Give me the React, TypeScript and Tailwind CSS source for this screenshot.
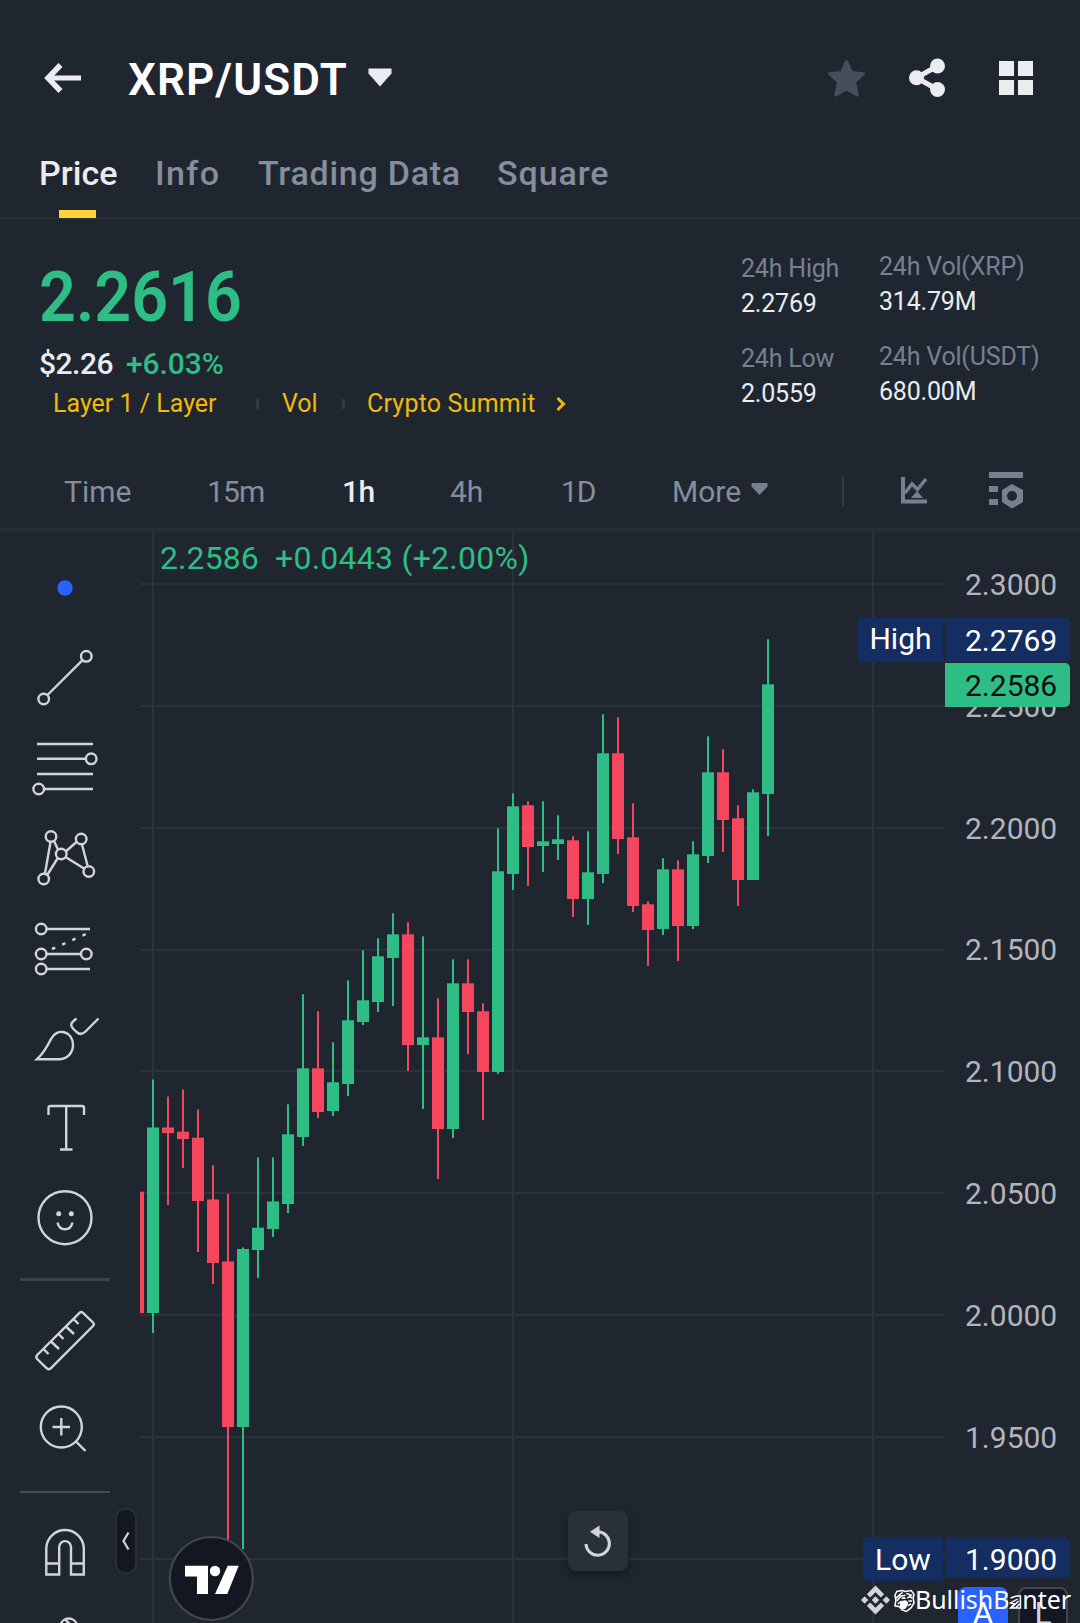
import React from "react";

const GREEN = "#2ebd85";
const RED = "#f6465d";

// [direction, high, body top, body bottom, low], one candle every 15px
const candles: [string, number, number, number, number][] = [
  ["g", 1079.5, 1127.5, 1313, 1333],
  ["r", 1096.5, 1127.5, 1133, 1205],
  ["r", 1089.5, 1131.7, 1139, 1168],
  ["r", 1109.5, 1137.7, 1201, 1252],
  ["r", 1165.2, 1199.5, 1263, 1284],
  ["r", 1193.8, 1261.5, 1427, 1545],
  ["g", 1247.5, 1249, 1427, 1549],
  ["g", 1157.5, 1227.7, 1250, 1278],
  ["g", 1157.5, 1201.5, 1229, 1237],
  ["g", 1104.3, 1134.3, 1204, 1213],
  ["g", 994.3, 1068.3, 1137, 1146],
  ["r", 1011.3, 1068.3, 1112, 1118],
  ["g", 1042.3, 1082.3, 1111, 1116],
  ["g", 980.3, 1020.3, 1084, 1096],
  ["g", 950.3, 1000.3, 1022, 1025],
  ["g", 938.3, 956.3, 1002, 1012],
  ["g", 913.3, 934.3, 958, 1006],
  ["r", 922.3, 934.3, 1045, 1071],
  ["g", 936.3, 1037.3, 1045, 1109],
  ["r", 998.3, 1037.3, 1129, 1179],
  ["g", 959.3, 983.3, 1129, 1138],
  ["r", 959.3, 983.3, 1012, 1054],
  ["r", 1003.3, 1011.3, 1072, 1120],
  ["g", 828.3, 871.3, 1072, 1074],
  ["g", 793.3, 806.3, 874, 890],
  ["r", 801.3, 805.3, 847, 886],
  ["g", 801.3, 841.3, 846, 872],
  ["g", 815.3, 839.3, 844, 860],
  ["r", 836.3, 840.3, 899, 917],
  ["g", 831.3, 872.3, 899, 925],
  ["g", 714.3, 753.3, 874, 883],
  ["r", 717.3, 753.3, 839, 854],
  ["r", 803.3, 837.3, 906, 912],
  ["r", 901.3, 904.3, 930, 966],
  ["g", 858.3, 869.3, 929, 935],
  ["r", 860.3, 869.3, 926, 961],
  ["g", 841.3, 854.3, 926, 929],
  ["g", 736.3, 772.3, 856, 863],
  ["r", 749.3, 772.3, 820, 852],
  ["r", 805.3, 818.3, 880, 906],
  ["g", 789.3, 792.3, 880, 880],
  ["g", 639.3, 684.3, 794, 836],
];

const gridYs = [584, 706, 828, 950, 1071, 1193, 1315, 1437, 1559];
const axisLabels = ["2.3000", "2.2500", "2.2000", "2.1500", "2.1000", "2.0500", "2.0000", "1.9500"];

function Header() {
  return (
    <header className="flex h-[158px] items-center pl-[43px] pr-[47px]">
      <svg className="h-[32px] w-[39px] -mt-[2px]" viewBox="43 62 39 32" fill="none" stroke="#eaecef" strokeWidth="5">
        <path d="M81 78H48" />
        <path d="M60.500 65L48 78L60.500 91" strokeWidth="5.500" />
      </svg>
      <h1 className="ml-[46px] mt-[2px] w-[239px] text-[44px] font-semibold leading-none tracking-[1.1px] text-white">XRP/USDT</h1>
      <svg className="ml-[1px] -mt-[3px] h-[19px] w-[24px]" viewBox="0 0 24 19" fill="#eaecef">
        <path d="M0.500 0.500H23.500V5.500L12 18.500L0.500 5.500Z" />
      </svg>
      <div className="ml-auto flex items-center">
        <svg className="h-[40px] w-[40px]" viewBox="827 59 40 40" fill="#474d59" stroke="#474d59" strokeWidth="3" strokeLinejoin="round">
          <path d="M847.500 61.500L852.500 72.500L864.500 73.700L855.500 82L858.200 95L847.500 89L836.800 95L839.500 82L830.500 73.700L842.500 72.500Z" />
        </svg>
        <svg className="ml-[42px] h-[40px] w-[38px] -mt-[2px]" viewBox="909 58 38 40" fill="#eaecef">
          <path d="M938.500 66L917.500 77.700L938.500 89.500" fill="none" stroke="#eaecef" strokeWidth="5" />
          <circle cx="938.500" cy="66" r="7.500" />
          <circle cx="917.500" cy="77.700" r="7.500" />
          <circle cx="938.500" cy="89.500" r="7.500" />
        </svg>
        <div className="-mt-[2px] ml-[53px] grid grid-cols-2 gap-1">
          <i className="size-[15px] bg-[#eaecef]" />
          <i className="size-[15px] bg-[#eaecef]" />
          <i className="size-[15px] bg-[#eaecef]" />
          <i className="size-[15px] bg-[#eaecef]" />
        </div>
      </div>
    </header>
  );
}

function Tabs() {
  return (
    <nav className="grid h-[61px] grid-cols-[116px_103px_239px_200px] border-b-2 border-[#29303a] pl-[39px] text-[34px] font-medium leading-[30px] text-[#848e9c]">
      <span className="relative text-[#eaecef]">
        Price
        <i className="absolute -bottom-px left-[20px] h-2 w-[37px] bg-[#fcd535]" />
      </span>
      <span className="tracking-[1.4px]">Info</span>
      <span className="tracking-[0.75px]">Trading Data</span>
      <span className="tracking-[0.9px]">Square</span>
    </nav>
  );
}

function Stat({ label, value }: { label: string; value: string }) {
  return (
    <div className="h-[70px] whitespace-nowrap text-[25px] leading-[35px] tracking-[-0.2px] text-[#eaecef]">
      <div className="text-[#76808f]">{label}</div>
      <div>{value}</div>
    </div>
  );
}

function Summary() {
  return (
    <section className="flex h-[236px]">
      <div className="w-[741px] pl-[39px] pt-[47px]">
        <div className="h-[62px] origin-left scale-x-[0.91] text-[71px] font-semibold leading-[62px] text-[#2ebd85]">2.2616</div>
        <div className="mt-[18px] flex h-[36px] text-[30px] font-medium leading-[36px]">
          <span className="w-[87px] tracking-[-0.5px] text-[#eaecef]">$2.26</span>
          <span className="tracking-[-0.1px] text-[#2ebd85]">+6.03%</span>
        </div>
        <div className="mt-2 flex h-7 items-center whitespace-nowrap pl-[14px] text-[25px] leading-7 text-[#f0b90b]">
          <span className="w-[203px]">Layer 1 / Layer</span>
          <i className="h-[10px] w-[3px] bg-[#333b47]" />
          <span className="ml-[23px] w-[60px]">Vol</span>
          <i className="h-[10px] w-[3px] bg-[#333b47]" />
          <span className="ml-[22px] w-[189px] tracking-[0.2px]">Crypto Summit</span>
          <svg className="h-4 w-[10px]" viewBox="0 0 10 16" fill="none" stroke="#f0b90b" strokeWidth="3">
            <path d="M1.500 2L7.500 8L1.500 14" />
          </svg>
        </div>
      </div>
      <div className="flex w-[138px] flex-col gap-5 pt-[32px]">
        <Stat label="24h High" value="2.2769" />
        <Stat label="24h Low" value="2.0559" />
      </div>
      <div className="flex flex-col gap-5 pt-[30px]">
        <Stat label="24h Vol(XRP)" value="314.79M" />
        <Stat label="24h Vol(USDT)" value="680.00M" />
      </div>
    </section>
  );
}

function Intervals() {
  return (
    <div className="grid h-[76px] grid-cols-[143px_135px_108px_111px_111px_79px_91px_58px_88px_40px] items-center border-b-[3px] border-[#262d37] pl-[64px] pt-px text-[30px] leading-none text-[#848e9c]">
      <span>Time</span>
      <span className="tracking-[-0.9px]">15m</span>
      <span className="font-medium tracking-[-0.5px] text-[#eaecef]">1h</span>
      <span>4h</span>
      <span className="tracking-[-1.2px]">1D</span>
      <span>More</span>
      <svg className="-mt-[7px] h-3 w-[17px]" viewBox="0 0 17 12" fill="#76808f">
        <path d="M0.500 0H16.500V3.500L8.500 12L0.500 3.500Z" />
      </svg>
      <i className="-mt-[2px] h-[30px] w-[2px] bg-[#333b47]" />
      <svg className="-mt-[4px] h-7 w-7" viewBox="901 476 28 28" fill="none" stroke="#76808f" strokeWidth="4">
        <path d="M904 477V501.500H928" />
        <path d="M906 493L913 484L918.500 489.500L927 479" strokeWidth="3.500" />
        <path d="M912 498L918 491L924 498Z" fill="#76808f" stroke="none" />
      </svg>
      <svg className="-mt-[4px] h-[38px] w-9" viewBox="990 472 36 38" fill="#76808f">
        <path d="M991 473H1025V479H991ZM991 487H1000V493H991ZM991 500H1000V506H991Z" />
        <path fillRule="evenodd" d="M1014 485L1025 491V503L1014 509.500L1004 503V491ZM1014 492A5 5 0 1 0 1014 502A5 5 0 1 0 1014 492Z" />
      </svg>
    </div>
  );
}

function Tool({ y, h, children }: { y: number; h: number; children: React.ReactNode }) {
  return (
    <svg width="140" height={h} viewBox={`0 ${y} 140 ${h}`} className="block shrink-0" fill="none" stroke="#d1d4dc" strokeWidth="2.400">
      {children}
    </svg>
  );
}

function Toolbar() {
  return (
    <aside className="relative flex w-[140px] flex-col">
      <Tool y={531} h={94}>
        <circle cx="65" cy="588" r="7.700" fill="#2962ff" stroke="none" />
      </Tool>
      <Tool y={625} h={95}>
        <circle cx="43.700" cy="699" r="5.300" />
        <circle cx="86.300" cy="656.300" r="5.300" />
        <path d="M47.500 695L82.300 660.300" />
      </Tool>
      <Tool y={720} h={90}>
        <path d="M37 744H93M37 758.800H85.500M37 774H93M44 789H93" />
        <circle cx="91.200" cy="758.800" r="5.300" />
        <circle cx="38.700" cy="789" r="5.300" />
      </Tool>
      <Tool y={810} h={90}>
        <path d="M54 841L58 849.500M50.500 842L45 873.500M47.500 874.500L57.500 858.500M65.700 851.500L76.500 842M65.500 857L84 868.500M82 844.500L87.500 865.500" />
        <circle cx="51" cy="836.500" r="5.300" />
        <circle cx="81.200" cy="839" r="5.300" />
        <circle cx="61.200" cy="854" r="5.300" />
        <circle cx="43.700" cy="879" r="5.300" />
        <circle cx="88.800" cy="871.500" r="5.300" />
      </Tool>
      <Tool y={900} h={95}>
        <path d="M46.500 929H90M46.500 954H81M46.500 969H90" />
        <circle cx="41.200" cy="929" r="5.300" />
        <circle cx="41.200" cy="954" r="5.300" />
        <circle cx="86.300" cy="954" r="5.300" />
        <circle cx="41.200" cy="969" r="5.300" />
        <path d="M52 949L86 934" strokeWidth="2.500" strokeDasharray="3.500 7.600" />
      </Tool>
      <Tool y={995} h={85}>
        <path d="M37 1059.200C44 1053 48 1045 51 1039C57 1027 73 1031 73 1045C73 1053 67 1059.200 59 1059.200Z" />
        <path d="M76.500 1018.500L73 1021.500Q69.500 1024.500 73 1028.500L76.500 1032Q81 1036 85.500 1031.500L98.500 1018.500" />
      </Tool>
      <Tool y={1080} h={90}>
        <path d="M48.500 1115V1108Q48.500 1106 50.500 1106H82Q84 1106 84 1108V1115M66.200 1106V1149.500M60 1149.500H72.500" />
      </Tool>
      <Tool y={1170} h={95}>
        <circle cx="65" cy="1217.700" r="26.500" />
        <circle cx="58.700" cy="1213.700" r="2.500" fill="#d1d4dc" stroke="none" />
        <circle cx="71.300" cy="1213.700" r="2.500" fill="#d1d4dc" stroke="none" />
        <path d="M57.500 1222.500C59.500 1231.500 70.500 1231.500 72.500 1222.500" />
      </Tool>
      <div className="ml-5 mt-[13px] h-[3px] w-[90px] bg-[#3b424d]" />
      <div className="h-[14px]" />
      <Tool y={1295} h={90}>
        <path d="M79.500 1312.800Q81.200 1311.200 83 1312.800L93 1322.500Q94.700 1324.200 93 1326L50.500 1368.500Q48.700 1370 47 1368.500L37.200 1359Q35.500 1357 37.200 1355Z" />
        <path d="M43.500 1349L48.500 1354M51 1341.500L59 1349M58.500 1334L63.500 1339M66 1326.500L74 1334M73.500 1319L78.500 1324" />
      </Tool>
      <Tool y={1385} h={85}>
        <circle cx="61.300" cy="1427" r="20.500" />
        <path d="M52.500 1427H70M61.300 1418V1435.500M76 1441.500L85.500 1451" />
      </Tool>
      <div className="mt-[21px] ml-5 h-[2px] w-[90px] bg-[#434a54]" />
      <Tool y={1493} h={102}>
        <path d="M46.300 1574.500V1547.500A18.800 18.800 0 0 1 83.800 1547.500V1574.500H71V1547A5.900 5.900 0 0 0 59.200 1547V1574.500ZM46.300 1563.500H59.200M71 1563.500H83.800" />
      </Tool>
      <Tool y={1595} h={28}>
        <path d="M60.500 1625A8.500 8.500 0 0 1 77 1625M65.500 1620L71 1625" />
      </Tool>
      <button className="absolute left-[115px] top-[977px] flex h-[66px] w-[22px] items-center justify-center rounded-[10px] border-2 border-[#2a2e39] bg-[#131722]">
        <svg className="h-[20px] w-[8px]" viewBox="0 0 8 20" fill="none" stroke="#d1d4dc" strokeWidth="2.200">
          <path d="M6.500 1.500L1.500 10L6.500 18.500" />
        </svg>
      </button>
    </aside>
  );
}

function Plot() {
  return (
    <div className="relative w-[805px]">
      <svg width="805" height="1092" viewBox="140 531 805 1092" className="block">
        <g stroke="#2b323c" strokeWidth="2">
          {gridYs.map((y) => (
            <path key={y} d={`M140 ${y}H945`} />
          ))}
          <path d="M153 531V1623M513 531V1623M873 531V1623" />
        </g>
        <rect x="140" y="1191.700" width="4" height="121.300" fill={RED} />
        {candles.map(([dir, high, top, bottom, low], i) => {
          const x = 153 + i * 15;
          return (
            <g key={x} fill={dir === "g" ? GREEN : RED}>
              <rect x={x - 1} y={high} width="2" height={low - high} />
              <rect x={x - 6} y={top} width="12" height={bottom - top} />
            </g>
          );
        })}
        <circle cx="211.300" cy="1578.500" r="41.500" fill="#131722" stroke="#434651" strokeWidth="2.200" />
        <path d="M185 1565.700H208V1594H197V1576.500H185ZM227.700 1565.700H238.700L227.300 1594H215Z" fill="#fff" />
        <circle cx="215" cy="1571" r="5.200" fill="#fff" />
      </svg>
      <div className="absolute left-[20px] top-[9px] flex whitespace-nowrap text-[32px] leading-[36px] text-[#2ebd85]">
        <span className="w-[115px] tracking-[0.1px]">2.2586</span>
        <span className="tracking-[0.25px]">+0.0443 (+2.00%)</span>
      </div>
      <button className="absolute left-[428px] top-[980px] flex size-[60px] items-center justify-center rounded-lg bg-[#2a303a] shadow-[0_4px_8px_rgba(0,0,0,0.4)]">
        <svg className="size-8" viewBox="582 1525 32 32" fill="none" stroke="#d1d4dc" strokeWidth="3">
          <path d="M586 1544A11.700 11.700 0 1 0 597.500 1531.800" />
          <path d="M599.500 1525.500V1538L590 1531.800Z" fill="#d1d4dc" stroke="none" />
        </svg>
      </button>
      <div className="absolute right-[2px] top-[87px] h-[44px] w-[85px] rounded-l-[4px] bg-[#142e61] text-center text-[30px] leading-[41px] text-white">High</div>
      <div className="absolute right-[2px] top-[1006px] h-[44px] w-[80px] rounded-l-[4px] bg-[#142e61] text-center text-[30px] leading-[45px] text-white">Low</div>
    </div>
  );
}

function PriceAxis() {
  return (
    <div className="relative w-[135px] text-[30px] text-[#b2b5be]">
      <div className="-mt-[7px] flex flex-col pl-5">
        {axisLabels.map((label) => (
          <div key={label} className="h-[121.800px] leading-[121.800px]">
            {label}
          </div>
        ))}
      </div>
      <div className="absolute left-0 top-[87px] h-[44px] w-[125px] rounded-r-[5px] bg-[#142e61] pl-5 leading-[46px] text-white">2.2769</div>
      <div className="absolute left-0 top-[132px] h-[44px] w-[125px] rounded-r-[5px] bg-[#2ebd85] pl-5 leading-[46px] text-[#0b0e11]">2.2586</div>
      <div className="absolute left-0 top-[1006px] h-[41px] w-[125px] rounded-tr-[5px] bg-[#142e61] pl-5 leading-[46px] text-white">1.9000</div>
      <div className="absolute left-[13px] top-[1056px] h-[60px] w-[50px] rounded-[8px] bg-[#2962ff] pt-[7px] text-center text-[32px] leading-[38px] text-white">A</div>
      <div className="absolute left-[73px] top-[1056px] h-[60px] w-[50px] rounded-[8px] border-2 border-[#434651] bg-[#131722] pt-[5px] text-center text-[32px] leading-[38px] text-[#d1d4dc]">L</div>
    </div>
  );
}

function Watermark() {
  return (
    <div className="absolute left-[861px] top-[1584px] flex h-[31px] items-center whitespace-nowrap">
      <svg className="h-[30px] w-[29px]" viewBox="0 0 30 30" fill="#d1d4dc">
        <path d="M15 0L24 9L20.500 12.500L15 7L9.500 12.500L6 9ZM15 30L24 21L20.500 17.500L15 23L9.500 17.500L6 21ZM15 11.200L18.800 15L15 18.800L11.200 15ZM3.800 11.200L7.600 15L3.800 18.800L0 15ZM26.200 11.200L30 15L26.200 18.800L22.400 15Z" />
      </svg>
      <svg className="ml-1 mt-[3px] h-6 w-[21px]" viewBox="0 0 22 24" fill="none" stroke="#fff" strokeWidth="1.600">
        <path d="M3 2L8 1L12 2L18 1L21 5L20 9L21 14L18 19L13 23L8 21L6 18L1 17L2 11L1 6Z" />
        <path d="M2 9L9 3M3 12L7 7L12 6M13 4L18 6L14 9M8 9L12 9M4 15L8 12M15 12L19 12M14 17L18 15M16 7L19 9" />
        <path d="M7 14Q12 10 14 14L12 19Q9 21 7 18Z" fill="#fff" />
      </svg>
      <span className="-mt-[2px] flex items-center font-['Noto_Sans'] text-[25px] leading-[30px] tracking-[-0.05px] text-white">
        BullishB
        <svg className="mt-[6px] h-[14px] w-[13px]" viewBox="0 0 12 14" fill="none" stroke="#fff" strokeWidth="1.400">
          <path d="M1 3L7 1H11V13H1L5 9L1 8L8 4M3 12L9 6M6 13L10 9" />
        </svg>
        nter
      </span>
    </div>
  );
}

export default function App() {
  return (
    <main className="relative flex h-[1623px] w-[1080px] flex-col overflow-hidden bg-[#202630] font-['Roboto',sans-serif]">
      <Header />
      <Tabs />
      <Summary />
      <Intervals />
      <div className="flex h-[1092px]">
        <Toolbar />
        <Plot />
        <PriceAxis />
      </div>
      <Watermark />
    </main>
  );
}
